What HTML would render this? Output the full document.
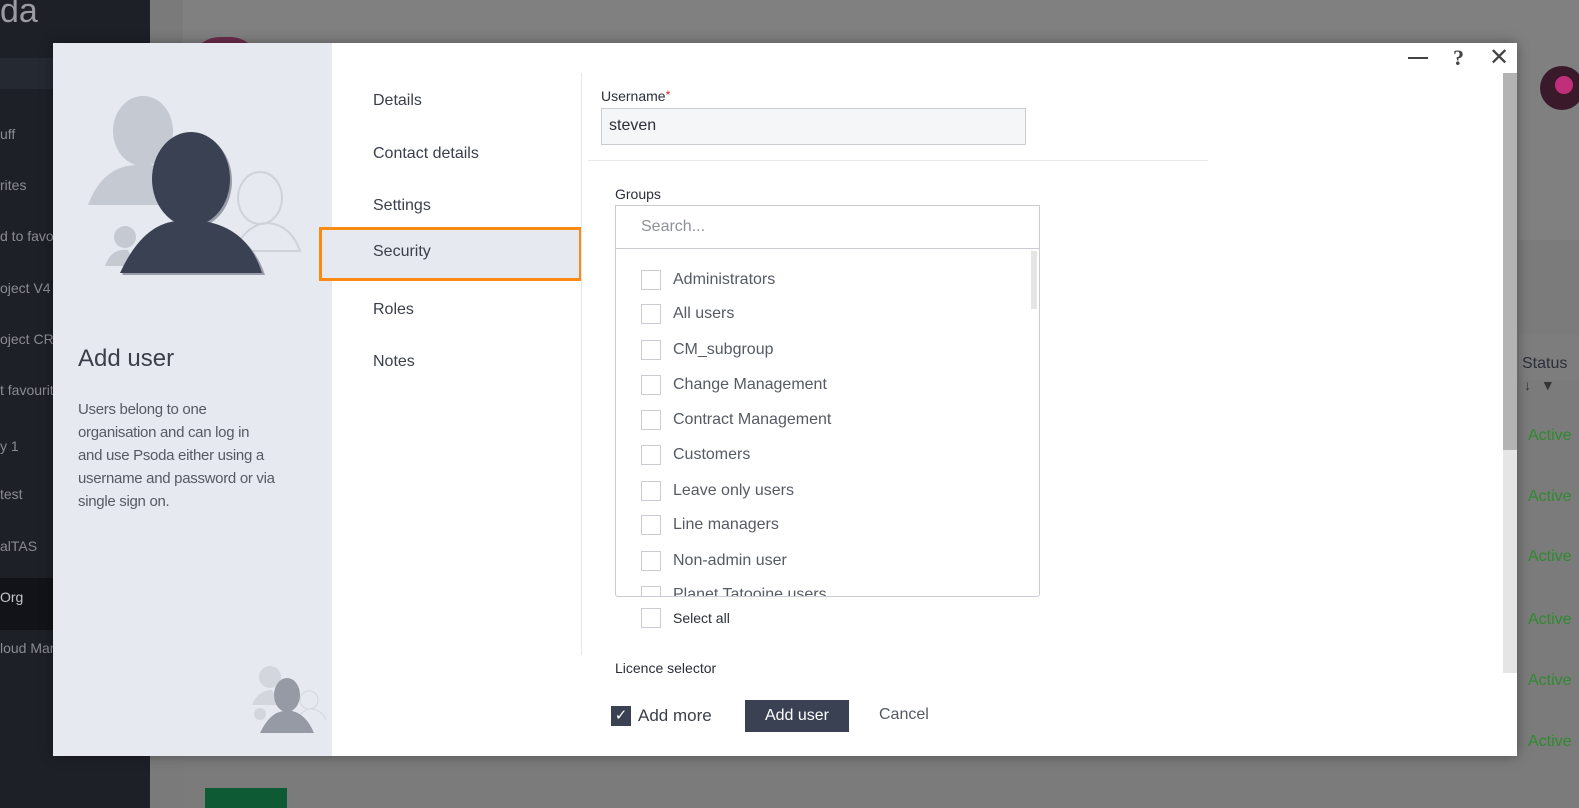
<!DOCTYPE html>
<html><head><style>
*{box-sizing:border-box;margin:0;padding:0}
body{width:1579px;height:808px;overflow:hidden;background:#7d7d7d;font-family:"Liberation Sans",sans-serif;position:relative}
.abs{position:absolute}
.sb{left:0;top:0;width:150px;height:808px;background:#1d2027}
.sb div{position:absolute;left:0;color:#8a8c92;font-size:14px}
.main{left:150px;top:0;width:1429px;height:808px;background:#7a7a7a}
.card{left:183px;top:0;width:1396px;height:240px;background:#808080}
.modal{left:53px;top:43px;width:1464px;height:713px;background:#fff;box-shadow:0 0 12px rgba(0,0,0,.35)}
.lp{left:0;top:0;width:279px;height:713px;background:#e6e9f0}
.nav{position:absolute;left:320px;color:#3a3f4a;font-size:16px}
.cb{position:absolute;width:20px;height:20px;border:1px solid #c9ccd2;background:#fff}
.gi{position:absolute;left:673px;font-size:16px;color:#555a63}
.act{position:absolute;left:1528px;color:#2e8b2e;font-size:16px}
</style></head><body>
<div class="abs main"></div>
<div class="abs card"></div>
<div class="abs" style="left:183px;top:240px;width:1396px;height:568px;background:#7b7b7b"></div>
<div class="abs" style="left:1517px;top:335px;width:62px;height:45px;background:#7d7d7d"></div>
<div class="abs" style="left:1522px;top:355px;font-size:16px;color:#2a2e38">Status</div>
<div class="abs" style="left:1524px;top:377px;font-size:14px;color:#333">↓ <span style="margin-left:6px">▼</span></div>
<div class="act" style="top:427px">Active</div><div class="act" style="top:488px">Active</div><div class="act" style="top:548px">Active</div><div class="act" style="top:611px">Active</div><div class="act" style="top:672px">Active</div><div class="act" style="top:733px">Active</div>
<div class="abs" style="left:1540px;top:66px;width:44px;height:44px;border-radius:50%;background:#3a1a2a"></div>
<div class="abs" style="left:1555px;top:76px;width:18px;height:18px;border-radius:50%;background:#c0307a"></div>
<div class="abs" style="left:190px;top:37px;width:70px;height:30px;border-radius:35px 35px 0 0;background:#6b2d4a"></div>
<div class="abs" style="left:205px;top:788px;width:82px;height:20px;background:#0d5a35"></div>
<div class="abs sb">
<div style="top:-8px;left:0;font-size:34px;color:#9a9ca2">da</div>
<div style="top:58px;width:150px;height:31px;background:#252932"></div>
<div style="top:126px">uff</div>
<div style="top:177px">rites</div>
<div style="top:228px">d to favourites</div>
<div style="top:280px">oject V4</div>
<div style="top:331px">oject CRM</div>
<div style="top:382px">t favourites</div>
<div style="top:438px">y 1</div>
<div style="top:486px">test</div>
<div style="top:538px">alTAS</div>
<div style="top:578px;width:150px;height:52px;background:#111318"></div>
<div style="top:589px;color:#c5c7cc">Org</div>
<div style="top:640px">loud Manager</div>
</div>
<div class="abs modal">
<div class="abs lp">
<svg class="abs" style="left:0;top:0" width="279" height="300" viewBox="0 0 279 300">
<ellipse cx="90" cy="88" rx="30" ry="35" fill="#c5c9d1"/>
<path d="M35 162 Q50 122 85 122 L122 122 L122 162Z" fill="#c5c9d1"/>
<ellipse cx="207" cy="155" rx="22" ry="26" fill="none" stroke="#cfd2d8" stroke-width="2"/>
<path d="M180 208 Q195 180 215 180 Q238 182 247 208Z" fill="none" stroke="#cfd2d8" stroke-width="2"/>
<circle cx="72" cy="194" r="11" fill="#c5c9d1"/>
<path d="M52 223 Q58 205 75 207 L82 223Z" fill="#c5c9d1"/>
<ellipse cx="140" cy="138" rx="39" ry="47" fill="#989ca6"/>
<ellipse cx="138" cy="136" rx="39" ry="47" fill="#3a4152"/>
<path d="M69 232 Q92 182 127 180 L150 180 Q197 187 212 232Z" fill="#989ca6"/>
<path d="M67 230 Q90 180 125 178 L150 178 Q195 185 209 230Z" fill="#3a4152"/>
</svg>
<div class="abs" style="left:25px;top:302px;font-size:24px;color:#3a3f4a">Add user</div>
<div class="abs" style="left:25px;top:355px;width:250px;font-size:15px;letter-spacing:-0.3px;line-height:23px;color:#555a63">Users belong to one<br>organisation and can log in<br>and use Psoda either using a<br>username and password or via<br>single sign on.</div>
<svg class="abs" style="left:193px;top:619px" width="85" height="75" viewBox="0 0 85 75">
<circle cx="24" cy="15" r="11" fill="#d3d6dc"/><path d="M6 43 Q12 28 26 28 L34 43Z" fill="#d3d6dc"/>
<circle cx="63" cy="38" r="9" fill="none" stroke="#d3d6dc"/>
<path d="M50 58 Q58 46 66 47 Q76 48 80 58" fill="none" stroke="#d3d6dc"/>
<circle cx="14" cy="52" r="6" fill="#d3d6dc"/>
<ellipse cx="41" cy="33" rx="13" ry="17" fill="#959aa5"/>
<path d="M14 71 Q24 50 38 49 L46 49 Q60 52 68 71Z" fill="#959aa5"/>
</svg>
</div>
<div class="nav" style="top:49px">Details</div>
<div class="nav" style="top:102px">Contact details</div>
<div class="nav" style="top:154px">Settings</div>
<div class="abs" style="left:266px;top:184px;width:263px;height:54px;border:3px solid #fa8a12;background:#e6e9f0"></div>
<div class="nav" style="top:200px">Security</div>
<div class="nav" style="top:258px">Roles</div>
<div class="nav" style="top:310px">Notes</div>
<div class="abs" style="left:528px;top:30px;width:1px;height:582px;background:#e5e6e9"></div>
<div class="abs" style="left:1355px;top:14px;width:20px;height:2px;background:#444"></div>
<div class="abs" style="left:1400px;top:2px;font-size:22px;color:#444;font-family:'Liberation Serif',serif;font-weight:bold">?</div>
<div class="abs" style="left:1436px;top:0px;font-size:24px;color:#444">✕</div>
<div class="abs" style="left:1450px;top:400px;width:14px;height:230px;background:#e5e5e5"></div>
<div class="abs" style="left:1450px;top:30px;width:14px;height:377px;background:#b3b3b3"></div>
</div>
<div class="abs" style="left:601px;top:88px;font-size:14px;color:#2a2e38">Username<span style="color:#e02020;font-size:12px;vertical-align:top">*</span></div>
<div class="abs" style="left:601px;top:108px;width:425px;height:37px;border:1px solid #c9ccd2;background:#f5f6f8;padding:8px 7px;font-size:16px;color:#2a2e38">steven</div>
<div class="abs" style="left:588px;top:160px;width:620px;height:1px;background:#e8e9ec"></div>
<div class="abs" style="left:615px;top:186px;font-size:14px;color:#2a2e38">Groups</div>
<div class="abs" style="left:615px;top:205px;width:425px;height:44px;border:1px solid #c9ccd2;padding:12px 25px;font-size:16px;color:#8d9199">Search...</div>
<div class="abs" style="left:615px;top:249px;width:425px;height:348px;border:1px solid #c9ccd2;border-top:none;border-radius:0 0 3px 3px;overflow:hidden">
<div class="abs" style="right:2px;top:2px;width:6px;height:58px;background:#e5e5e5"></div>
</div>
<div class="cb" style="left:641px;top:270px"></div><div class="gi" style="top:271px">Administrators</div>
<div class="cb" style="left:641px;top:304px"></div><div class="gi" style="top:305px">All users</div>
<div class="cb" style="left:641px;top:340px"></div><div class="gi" style="top:341px">CM_subgroup</div>
<div class="cb" style="left:641px;top:375px"></div><div class="gi" style="top:376px">Change Management</div>
<div class="cb" style="left:641px;top:410px"></div><div class="gi" style="top:411px">Contract Management</div>
<div class="cb" style="left:641px;top:445px"></div><div class="gi" style="top:446px">Customers</div>
<div class="cb" style="left:641px;top:481px"></div><div class="gi" style="top:482px">Leave only users</div>
<div class="cb" style="left:641px;top:515px"></div><div class="gi" style="top:516px">Line managers</div>
<div class="cb" style="left:641px;top:551px"></div><div class="gi" style="top:552px">Non-admin user</div>
<div class="abs" style="left:616px;top:583px;width:423px;height:13px;overflow:hidden"><div class="cb" style="left:25px;top:3px"></div><div class="gi" style="left:57px;top:3px">Planet Tatooine users</div></div>
<div class="cb" style="left:641px;top:608px"></div><div class="abs" style="left:673px;top:610px;font-size:14px;color:#2a2e38">Select all</div>
<div class="abs" style="left:615px;top:660px;font-size:14px;color:#2a2e38">Licence selector</div>
<div class="abs" style="left:611px;top:706px;width:20px;height:20px;background:#3a4152;color:#fff;font-size:15px;text-align:center;line-height:20px">✓</div>
<div class="abs" style="left:638px;top:706px;font-size:17px;color:#3a3f4a">Add more</div>
<div class="abs" style="left:745px;top:700px;width:104px;height:32px;background:#3a4152;color:#fff;font-size:16px;text-align:center;line-height:32px">Add user</div>
<div class="abs" style="left:879px;top:706px;font-size:16px;color:#555a63">Cancel</div>
</body></html>
